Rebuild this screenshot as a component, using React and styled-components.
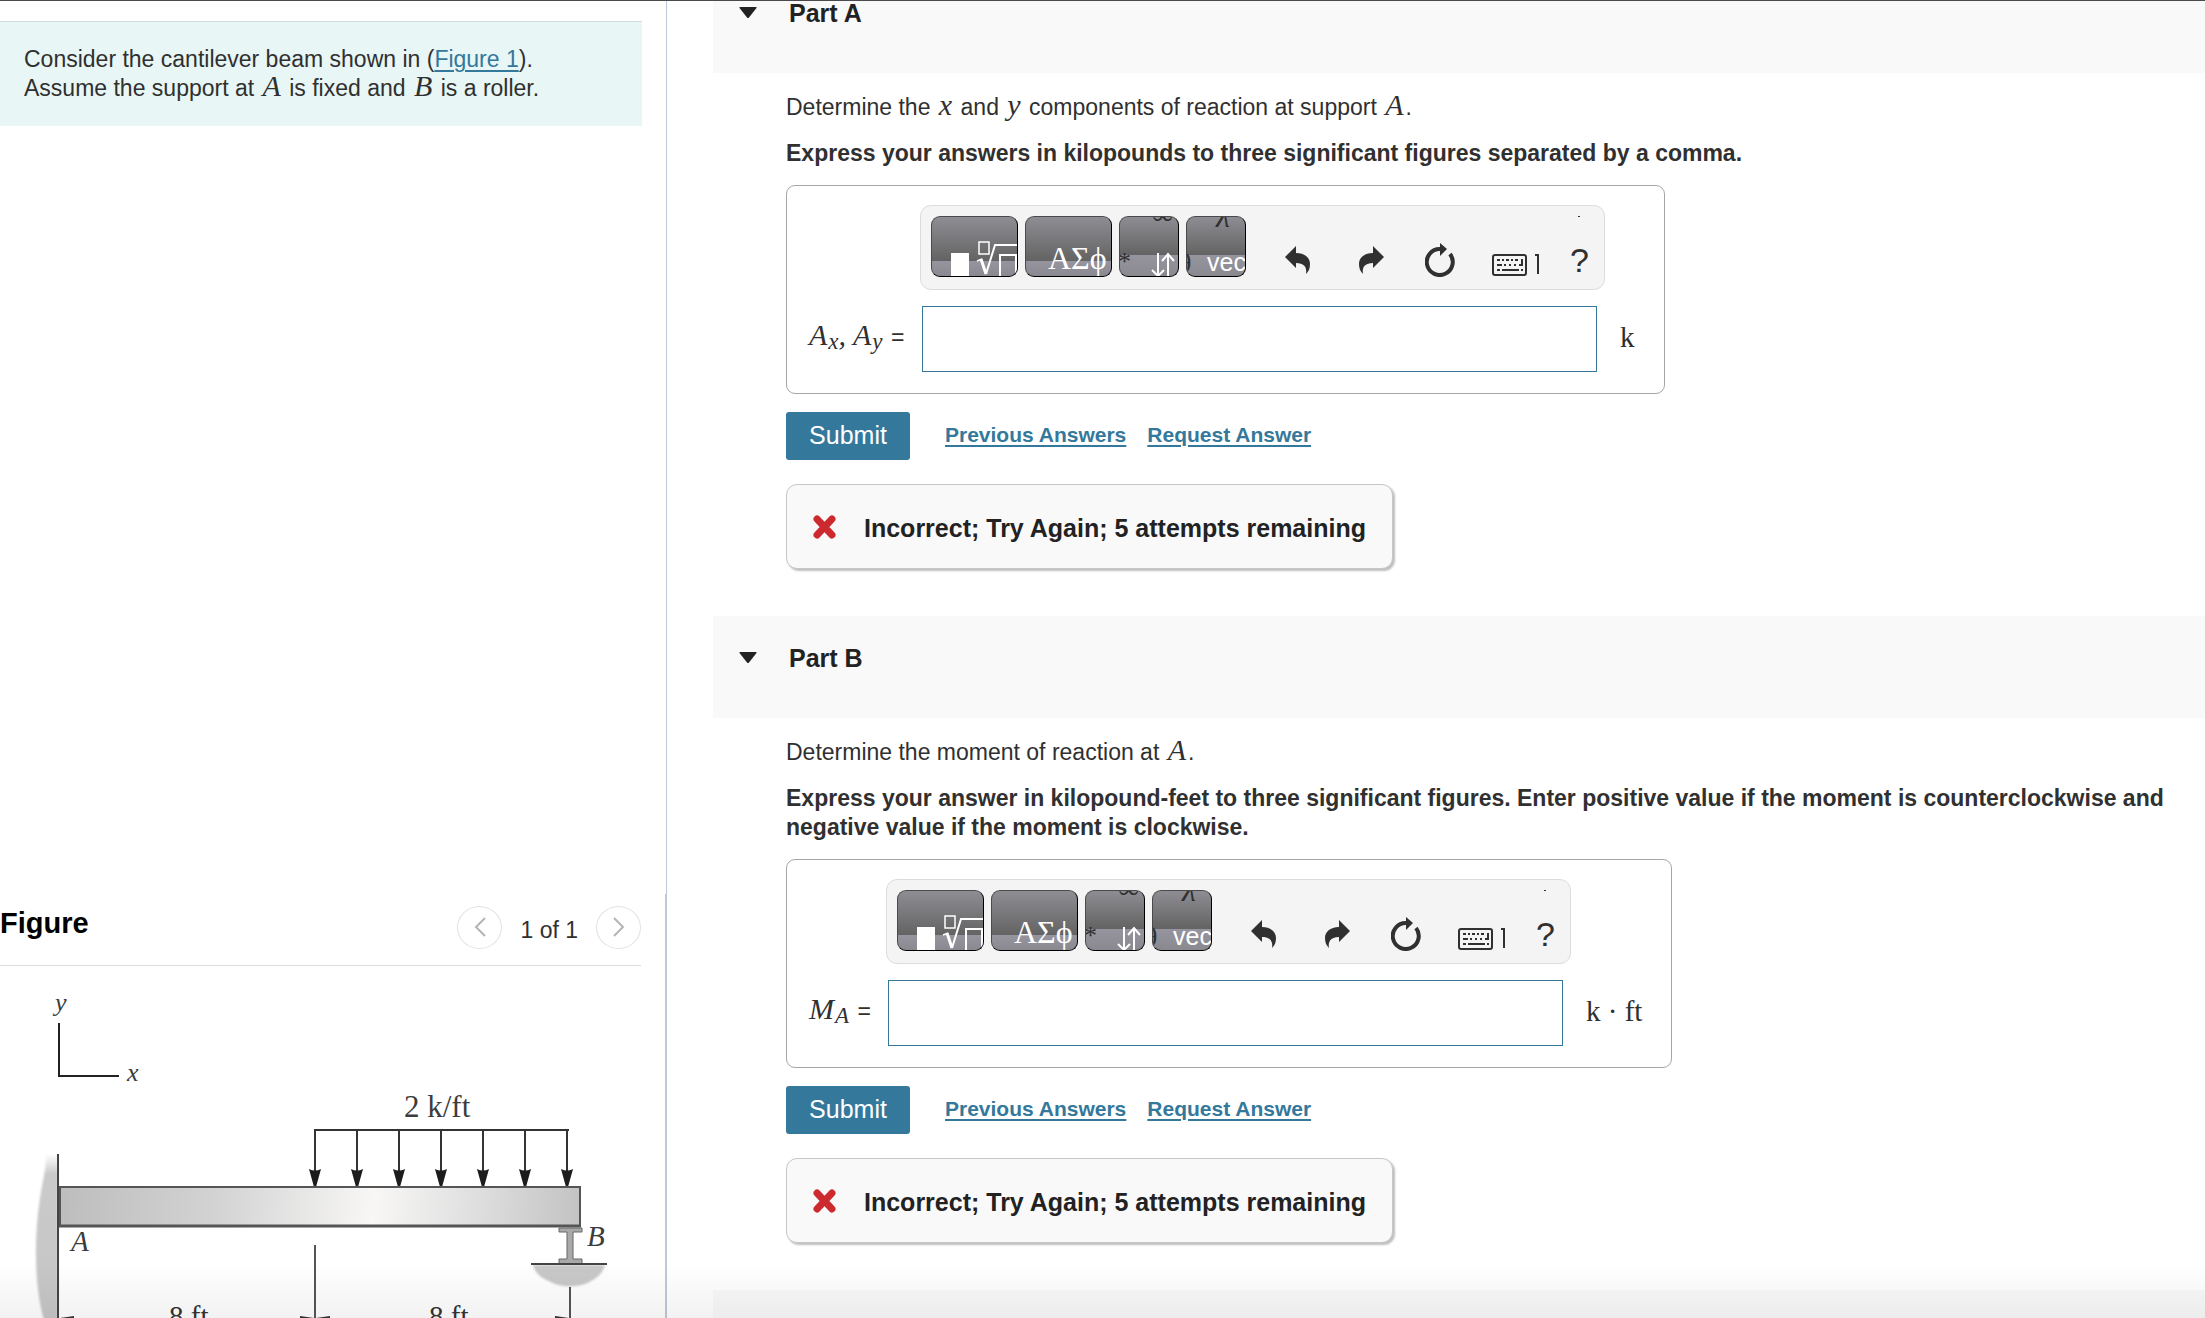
import styled, { createGlobalStyle } from "styled-components";

const GlobalStyle = createGlobalStyle`
  * {
    box-sizing: border-box;
  }

  body {
    margin: 0;
    background: white;
    color: #303030;
    font-family: "Liberation Sans", Arial, Helvetica, sans-serif;
    font-size: 23px;
    line-height: 29px;
  }
`;

const Page = styled.div`
  position: relative;
  display: grid;
  grid-template-columns: 667px minmax(0, 1fr);
  height: 100vh;
  overflow: hidden;
  border-top: 1px solid #4a494c;
`;

const BottomFade = styled.div`
  position: absolute;
  left: 0;
  right: 0;
  bottom: 0;
  height: 56px;
  pointer-events: none;
  background: linear-gradient(rgba(0, 0, 0, 0), rgba(0, 0, 0, 0.05));
`;

const Sidebar = styled.aside`
  display: flex;
  flex-direction: column;
  min-height: 0;
`;

const Problem = styled.section`
  flex: 1;
  padding: 20px 24px 0 0;
  border-right: 1px solid #bfc8d6;
`;

const Intro = styled.p`
  margin: 0;
  padding: 23px 24px;
  background: #e8f6f5;
  border-top: 1px solid #d5dcde;
`;

const FigurePanel = styled.section`
  flex: 0 0 424px;
  overflow: hidden;
  padding-right: 24px;
  border-right: 2px solid #bfc8d6;
`;

const FigureHeader = styled.div`
  display: flex;
  justify-content: space-between;
  height: 72px;
  padding-top: 11px;
  border-bottom: 1px solid #dcdcdc;
`;

const FigureTitle = styled.h2`
  margin: 0;
  padding-top: 1px;
  color: black;
  font-size: 29px;
  line-height: 34px;
`;

const Pager = styled.div`
  display: flex;
  align-items: center;
  gap: 18px;
  height: 44px;
`;

const PagerText = styled.span`
  padding-top: 6px;
`;

const PagerButton = styled.button`
  display: flex;
  align-items: center;
  justify-content: center;
  width: 45px;
  height: 43px;
  padding: 0;
  background: white;
  border: 1px solid #e2e2e2;
  border-radius: 50%;
  cursor: pointer;
`;

const Drawing = styled.svg`
  display: block;
  font-family: "Liberation Serif", "Times New Roman", serif;
  font-size: 29px;
  fill: #3c3c3c;
`;

const Content = styled.main`
  min-width: 0;
  padding-left: 46px;
  overflow: hidden;
`;

/* the panel opens scrolled a little way down */
const Scrolled = styled.div`
  margin-top: -30px;
`;

const PartHeader = styled.button`
  display: flex;
  align-items: flex-start;
  gap: 32px;
  width: 100%;
  height: 102px;
  padding: 27px 26px;
  background: #f9f9f9;
  border: none;
  color: #222;
  font-family: inherit;
  font-size: 25px;
  font-weight: 700;
  line-height: 30px;
  text-align: left;
  cursor: pointer;
`;

const Caret = styled.svg`
  margin-top: 9px;
  fill: #222;
`;

const PartBody = styled.div`
  padding: 20px 0 47px 73px;
`;

const Text = styled.p`
  margin: 0 0 17px;
  font-weight: ${(props) => (props.$bold ? "700" : "400")};
`;

const Link = styled.a`
  color: #34789b;
  text-decoration: underline;
  text-decoration-thickness: 2px;
  text-underline-offset: 3px;
  font-size: ${(props) => (props.$bold ? "21px" : "inherit")};
  font-weight: ${(props) => (props.$bold ? "700" : "400")};
`;

const Math = styled.i`
  padding: 0 2px;
  font-family: "Liberation Serif", "Times New Roman", serif;
  font-size: 30px;
  line-height: 1px;

  sub {
    padding-left: 1px;
    font-size: 23px;
    line-height: 1px;
    vertical-align: -4px;
  }
`;

const AnswerBox = styled.div`
  display: grid;
  grid-template-columns: ${(props) => props.$label}px 685px auto;
  align-items: center;
  row-gap: 16px;
  width: fit-content;
  padding: 19px 29px 21px 20px;
  border: 1px solid #a6a6a6;
  border-radius: 9px;
`;

const Toolbar = styled.div`
  grid-column: 2;
  display: flex;
  gap: 7px;
  height: 85px;
  padding: 10px 4px 12px 10px;
  background: #f4f4f4;
  border: 1px solid #dcdcdc;
  border-radius: 11px;
`;

const TemplateButton = styled.button`
  flex: none;
  width: ${(props) => props.$width}px;
  height: 61px;
  padding: 0;
  overflow: hidden;
  background: linear-gradient(
    #8e8d93,
    #636363 ${(props) => props.$split}%,
    #96959f ${(props) => props.$split}%,
    #8a8990
  );
  border: 1px solid;
  border-color: #4a4a4a black black #4a4a4a;
  border-radius: 9px;
  cursor: pointer;

  svg {
    display: block;
  }
`;

const Tools = styled.div`
  display: flex;
  padding-left: 8px;
`;

const ToolButton = styled.button`
  flex: none;
  width: ${(props) => props.$width}px;
  height: 61px;
  padding: 0;
  background: none;
  border: none;
  cursor: pointer;

  svg {
    display: block;
    margin: 0 auto;
    fill: #303030;
  }
`;

const AnswerLabel = styled.label`
  grid-column: 1;
  padding-bottom: 4px;
  white-space: nowrap;
`;

const AnswerInput = styled.input`
  width: 675px;
  height: 66px;
  margin-left: 2px;
  padding: 0 12px;
  border: 1px solid #34789b;
  font: inherit;
  outline: none;
`;

const Unit = styled.span`
  padding: 0 0 4px 15px;
  font-family: "Liberation Serif", "Times New Roman", serif;
  font-size: 29px;
`;

const Actions = styled.div`
  display: flex;
  align-items: center;
  gap: 21px;
  margin-top: 18px;

  a {
    padding-bottom: 3px;
  }
`;

const Submit = styled.button`
  width: 124px;
  height: 48px;
  margin-right: 14px;
  padding: 0 0 1px;
  background: #34789b;
  border: none;
  border-radius: 3px;
  color: white;
  font-family: inherit;
  font-size: 25px;
  cursor: pointer;
`;

const Feedback = styled.div`
  display: flex;
  align-items: center;
  gap: 27px;
  width: fit-content;
  height: 85px;
  margin-top: 24px;
  padding: 0 26px 0 25px;
  background: #f9f9f9;
  border: 1px solid #c6c6c6;
  border-radius: 11px;
  box-shadow: 2px 2px 2px rgba(0, 0, 0, 0.25);
  color: #222;
  font-size: 25px;
  font-weight: 700;
`;

const FeedbackText = styled.span`
  padding-top: 3px;
`;

const symbolFont = '"Liberation Serif", "DejaVu Serif", serif';

const MathToolbar = () => (
  <Toolbar>
    <TemplateButton $width={87} $split={75} aria-label="Templates">
      <svg width="85" height="59" fill="none" stroke="white">
        <rect x="19" y="36" width="18" height="24" fill="white" stroke="none" />
        <rect x="47" y="25" width="10" height="12" strokeWidth="1.5" />
        <path d="M45 44l5-2" strokeWidth="1.5" />
        <path d="M49 42l5 15" strokeWidth="3" />
        <path d="M54 57l9-29h24" strokeWidth="2" />
        <path d="M68 60V38h16v22" strokeWidth="2" />
      </svg>
    </TemplateButton>
    <TemplateButton $width={87} $split={75} aria-label="Symbols">
      <svg width="85" height="59" fontFamily={symbolFont} fontSize="32">
        <text x="22" y="52" fill="white">
          ΑΣϕ
        </text>
      </svg>
    </TemplateButton>
    <TemplateButton $width={60} $split={64} aria-label="Arrows and operators">
      <svg width="58" height="59" fontFamily={symbolFont} fill="#303030">
        <text x="32" y="7" fontSize="30">
          ∞
        </text>
        <text x="-2" y="53" fontSize="26">
          *
        </text>
        <g fill="none" stroke="white" strokeWidth="2">
          <path d="M38 36v22M32 53l6 6 6-6" />
          <path d="M48 60V38M42 44l6-7 6 7" />
        </g>
      </svg>
    </TemplateButton>
    <TemplateButton $width={60} $split={64} aria-label="Vectors">
      <svg width="58" height="59" fill="#303030">
        <text x="29" y="10" fontSize="32" fontStyle="italic" fontFamily={symbolFont}>
          λ
        </text>
        <text x="-9" y="55" fontSize="28" fontFamily={symbolFont}>
          θ
        </text>
        <text x="20" y="54" fontSize="25" fill="white" fontFamily="Liberation Sans, sans-serif">
          vec
        </text>
      </svg>
    </TemplateButton>
    <Tools>
      <ToolButton $width={74} aria-label="Undo">
        <svg width="26" height="61">
          <path d="M0 41L11 30v7C20 37 25 42 25 48c0 4-1 7-4 10 1-6-1-11-10-11v5z" />
        </svg>
      </ToolButton>
      <ToolButton $width={74} aria-label="Redo">
        <svg width="26" height="61">
          <path d="M25 41L14 30v7C5 37 0 42 0 48c0 4 1 7 4 10-1-6 1-11 10-11v5z" />
        </svg>
      </ToolButton>
      <ToolButton $width={62} aria-label="Reset">
        <svg width="30" height="61">
          <path
            d="M15 33A13 13 0 1 0 25 38"
            fill="none"
            stroke="#303030"
            strokeWidth="4"
          />
          <path d="M15 27l7 6-7 7z" />
        </svg>
      </ToolButton>
      <ToolButton $width={90} aria-label="Keyboard">
        <svg width="48" height="61">
          <rect
            x="1"
            y="39"
            width="33"
            height="20"
            rx="2"
            fill="none"
            stroke="#303030"
            strokeWidth="2"
          />
          <path d="M5 43h3v2H5zM10 43h2v2h-2zM14 43h3v2h-3zM19 43h2v2h-2zM23 43h3v2h-3zM29 43h2v7h-4v-2h2z" />
          <path d="M5 48h5v2H5zM12 48h2v2h-2zM17 48h2v2h-2zM22 48h2v2h-2zM5 53h3v2H5zM10 53h17v2H10zM29 53h2v2h-2z" />
          <path d="M43 39h3v19" fill="none" stroke="#303030" strokeWidth="2" />
        </svg>
      </ToolButton>
      <ToolButton $width={38} aria-label="Help">
        <svg width="20" height="61">
          <rect x="8" y="0" width="2" height="1" />
          <text x="0" y="56" fontSize="34" fontFamily="Liberation Sans, sans-serif">
            ?
          </text>
        </svg>
      </ToolButton>
    </Tools>
  </Toolbar>
);

const Part = ({ id, title, labelWidth, label, unit, children }) => (
  <section>
    <PartHeader aria-expanded="true">
      <Caret width="18" height="11">
        <path d="M1 0h16q1 0 .5 1L10 10.500q-1 1-2 0L.5 1Q0 0 1 0z" />
      </Caret>
      {title}
    </PartHeader>
    <PartBody>
      {children}
      <AnswerBox $label={labelWidth}>
        <MathToolbar />
        <AnswerLabel htmlFor={id}>{label}</AnswerLabel>
        <AnswerInput id={id} type="text" />
        <Unit>{unit}</Unit>
      </AnswerBox>
      <Actions>
        <Submit>Submit</Submit>
        <Link href="#previous" $bold>
          Previous Answers
        </Link>
        <Link href="#request" $bold>
          Request Answer
        </Link>
      </Actions>
      <Feedback>
        <svg width="25" height="24" stroke="#cc2a2e" strokeWidth="7" strokeLinecap="round">
          <path d="M5 4l15 16M20 4L5 20" />
        </svg>
        <FeedbackText>Incorrect; Try Again; 5 attempts remaining</FeedbackText>
      </Feedback>
    </PartBody>
  </section>
);

const loads = [315, 357, 399, 441, 483, 525, 567];

const BeamFigure = () => (
  <Drawing width="641" height="352">
    <defs>
      <linearGradient id="steel" gradientUnits="userSpaceOnUse" x1="59" y1="235" x2="581" y2="275">
        <stop offset="0" stopColor="#bdbdbd" />
        <stop offset="0.3" stopColor="#d3d3d3" />
        <stop offset="0.6" stopColor="#f8f7f6" />
        <stop offset="0.8" stopColor="#dedede" />
        <stop offset="1" stopColor="#c2c2c2" />
      </linearGradient>
      <linearGradient id="wall" x1="0" y1="0" x2="0" y2="1">
        <stop offset="0" stopColor="#cacaca" stopOpacity="0" />
        <stop offset="0.12" stopColor="#cacaca" />
        <stop offset="1" stopColor="#c6c6c6" />
      </linearGradient>
      <filter id="soft">
        <feGaussianBlur stdDeviation="1" />
      </filter>
    </defs>

    <g fontStyle="italic" fontSize="26">
      <text x="55" y="45">
        y
      </text>
      <text x="127" y="115">
        x
      </text>
    </g>
    <path d="M59 57v53h60" fill="none" stroke="#222" strokeWidth="2" />

    <text x="404" y="151" fontSize="31">
      2 k/ft
    </text>
    <path d="M314 164h255" stroke="#333" strokeWidth="2" />
    {loads.map((x) => (
      <g key={x} fill="#1c1c1c">
        <path d={`M${x} 164v44`} stroke="#333" strokeWidth="2" />
        <path d={`M${x - 6} 203q6 3 12 0l-5 18h-2z`} />
      </g>
    ))}

    <path
      d="M46 188h12v166H44C34 320 34 270 40 232C43 212 46 205 46 188z"
      fill="url(#wall)"
      filter="url(#soft)"
    />
    <path d="M58 188v166" stroke="#444" strokeWidth="2" />

    <rect x="60" y="222" width="520" height="37" fill="url(#steel)" />
    <path d="M59 221h522" stroke="#555" strokeWidth="2" />
    <path d="M59 260h522" stroke="#555" strokeWidth="3" />
    <path d="M580 221v39M60 221v39" stroke="#555" strokeWidth="2" />

    <g fontStyle="italic">
      <text x="71" y="285">
        A
      </text>
      <text x="587" y="280">
        B
      </text>
    </g>

    <path
      d="M533 299h72c-2 8-8 13-14 16-10 7-32 7-42 0-8-3-14-8-16-16z"
      fill="#c8c8c8"
      filter="url(#soft)"
    />
    <path
      d="M559 262h23v4h-9v27h9v5h-23v-5h8v-27h-8z"
      fill="#a9a9a9"
      stroke="#666"
      strokeWidth="1"
    />
    <path d="M531 298h76" stroke="#444" strokeWidth="2" />

    <path d="M315 279v75M570 321v33" stroke="#555" strokeWidth="2" />
    <g fill="#333">
      <path d="M300 350l14 2h-14zM330 350l-14 2h14zM555 350l14 2h-14zM74 350l-14 2h14z" />
      <text x="169" y="360">
        8 ft
      </text>
      <text x="429" y="360">
        8 ft
      </text>
    </g>
  </Drawing>
);

const App = () => {
  return (
    <Page>
      <GlobalStyle />
      <Sidebar>
        <Problem>
          <Intro>
            Consider the cantilever beam shown in (<Link href="#figure">Figure 1</Link>).
            <br />
            Assume the support at <Math>A</Math> is fixed and <Math>B</Math> is a roller.
          </Intro>
        </Problem>
        <FigurePanel id="figure">
          <FigureHeader>
            <FigureTitle>Figure</FigureTitle>
            <Pager>
              <PagerButton aria-label="Previous figure">
                <svg width="12" height="20" fill="none" stroke="#b5b5b5" strokeWidth="2">
                  <path d="M11 1L2 10l9 9" />
                </svg>
              </PagerButton>
              <PagerText>1 of 1</PagerText>
              <PagerButton aria-label="Next figure">
                <svg width="12" height="20" fill="none" stroke="#b5b5b5" strokeWidth="2">
                  <path d="M1 1l9 9-9 9" />
                </svg>
              </PagerButton>
            </Pager>
          </FigureHeader>
          <BeamFigure />
        </FigurePanel>
      </Sidebar>
      <Content>
        <Scrolled>
          <Part
            id="reaction"
            title="Part A"
            labelWidth={113}
            label={
              <>
                <Math>
                  A<sub>x</sub>, A<sub>y</sub>
                </Math>{" "}
                =
              </>
            }
            unit="k"
          >
            <Text>
              Determine the <Math>x</Math> and <Math>y</Math> components of reaction at support{" "}
              <Math>A</Math>.
            </Text>
            <Text $bold>
              Express your answers in kilopounds to three significant figures separated by a comma.
            </Text>
          </Part>
          <Part
            id="moment"
            title="Part B"
            labelWidth={79}
            label={
              <>
                <Math>
                  M<sub>A</sub>
                </Math>{" "}
                =
              </>
            }
            unit="k · ft"
          >
            <Text>
              Determine the moment of reaction at <Math>A</Math>.
            </Text>
            <Text $bold>
              Express your answer in kilopound-feet to three significant figures. Enter positive
              value if the moment is counterclockwise and negative value if the moment is clockwise.
            </Text>
          </Part>
          <PartHeader aria-label="Part C" />
        </Scrolled>
      </Content>
      <BottomFade />
    </Page>
  );
};

export default App;
